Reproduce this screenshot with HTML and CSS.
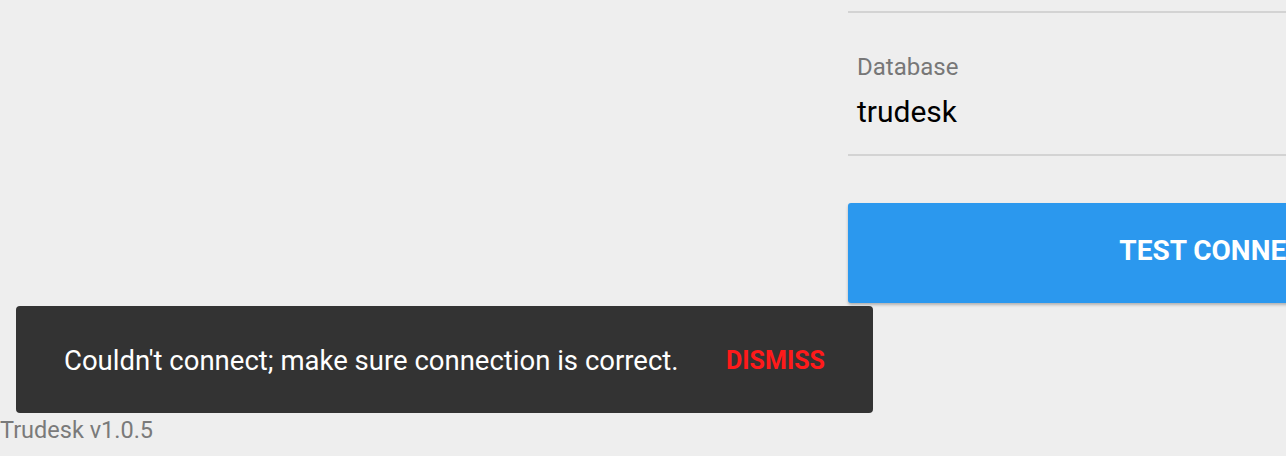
FILE: index.html
```html
<!DOCTYPE html>
<html lang="en">
<head>
<meta charset="utf-8">
<title>Trudesk</title>
<link rel="stylesheet" href="styles.css">
</head>
<body>
<div class="page">
  <main class="main">
    <section class="panel">
      <div class="field field-prev"></div>
      <div class="field">
        <label class="field-label">Database</label>
        <div class="field-value">trudesk</div>
      </div>
      <button class="btn-test">TEST CONNECTION</button>
    </section>
  </main>
  <footer class="footer">Trudesk v1.0.5</footer>
</div>
<div class="snackbar">
  <span class="snackbar-text">Couldn't connect; make sure connection is correct.</span>
  <span class="snackbar-action">DISMISS</span>
</div>
</body>
</html>
```
FILE: styles.css
```css
html, body {
  margin: 0;
  padding: 0;
  background: #eeeeee;
  overflow: hidden;
  width: 1286px;
  height: 456px;
}

body {
  font-family: Roboto, "Liberation Sans", sans-serif;
  position: relative;
}

.page {
  display: flex;
  flex-direction: column;
  height: 456px;
}

.main {
  height: 410px;
  display: flex;
  padding-left: 848px;
}

.panel {
  width: 792px;
  flex-shrink: 0;
  display: flex;
  flex-direction: column;
}

.field {
  border-bottom: 2px solid #d3d3d3;
  padding: 40px 0 24px 9px;
  display: flex;
  flex-direction: column;
}

.field-prev {
  height: 11px;
  padding: 0;
}

.field-label {
  font-size: 24px;
  line-height: 28px;
  color: #777777;
  font-weight: 400;
  margin-bottom: 13px;
}

.field-value {
  font-size: 30px;
  line-height: 36px;
  color: #000;
}

.btn-test {
  margin-top: 47px;
  height: 100px;
  width: 792px;
  border: none;
  border-radius: 3px;
  background: #2b98ee;
  color: #fff;
  font-family: Roboto, "Liberation Sans", sans-serif;
  font-weight: 700;
  font-size: 28px;
  padding: 0 0 6px 0;
  box-shadow: 0 2px 3px rgba(0, 0, 0, 0.25);
}

.footer {
  font-size: 23.5px;
  line-height: 28px;
  color: #7a7a7a;
  padding-top: 6px;
}

.snackbar {
  position: absolute;
  left: 16px;
  top: 306px;
  width: 857px;
  height: 107px;
  box-sizing: border-box;
  padding: 2px 48px 0 48px;
  background: #333333;
  border-radius: 4px;
  display: flex;
  align-items: center;
  justify-content: space-between;
}

.snackbar-text {
  color: #ffffff;
  font-size: 27.5px;
}

.snackbar-action {
  color: #ff1a1a;
  font-weight: 700;
  font-size: 25px;
}
```
